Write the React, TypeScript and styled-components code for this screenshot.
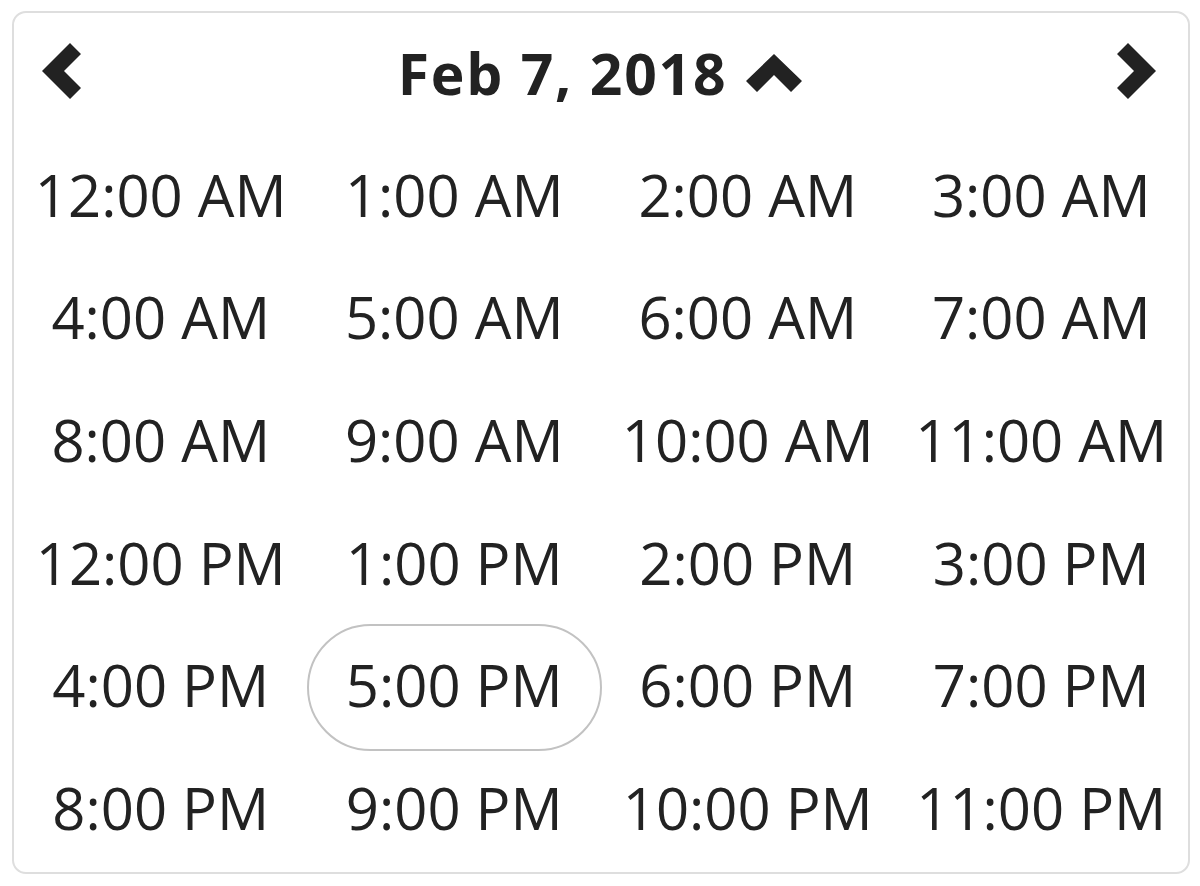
import styled, { createGlobalStyle } from 'styled-components'
import { FC, useState } from 'react'

const GlobalStyle = createGlobalStyle`
  html, body {
    margin: 0;
    padding: 0;
    background: #fff;
  }
  body {
    font-family: 'Open Sans', 'Liberation Sans', sans-serif;
    color: #222;
  }
`

const HOURS = Array.from({ length: 24 }, (_, i) => {
  const h = i % 12 === 0 ? 12 : i % 12
  return `${h}:00 ${i < 12 ? 'AM' : 'PM'}`
})

const Picker = styled.div`
  margin: 11px 0 0 12px;
  width: 1178px;
  box-sizing: border-box;
  border: 2px solid #dedede;
  border-radius: 14px;
  background: #fff;
  overflow: hidden;
`

const Header = styled.div`
  height: 123px;
  display: flex;
  align-items: center;
  justify-content: space-between;
  padding: 0 32px 0 28px;
`

const NavButton = styled.button`
  border: 0;
  background: none;
  padding: 0;
  margin: 0 0 8px;
  display: flex;
  cursor: pointer;
  color: #222;
`

const Title = styled.button`
  border: 0;
  background: none;
  padding: 0 0 0 2px;
  display: flex;
  align-items: center;
  gap: 19px;
  font-family: 'Open Sans', 'Liberation Sans', sans-serif;
  font-weight: 700;
  font-size: 57px;
  letter-spacing: 1.8px;
  line-height: 1.2;
  color: #222;
  cursor: pointer;
  margin-bottom: 2px;
`

const Grid = styled.div`
  display: grid;
  grid-template-columns: repeat(4, minmax(0, 1fr));
  grid-template-rows: repeat(6, 122.6px);
`

const Slot = styled.button<{ $selected?: boolean }>`
  margin: -2px -1px;
  border: 2px solid ${(p) => (p.$selected ? '#c2c2c2' : 'transparent')};
  border-radius: 64px;
  background: none;
  padding: 0 0 6px;
  display: flex;
  align-items: center;
  justify-content: center;
  font-family: 'Open Sans', 'Liberation Sans', sans-serif;
  font-size: 58px;
  font-weight: 400;
  color: #222;
  white-space: nowrap;
  cursor: pointer;
`

const ChevronSide: FC<{ dir: 'left' | 'right' }> = ({ dir }) => (
  <svg width='39' height='56' viewBox='0 0 39 56'>
    <polygon
      fill='currentColor'
      points={
        dir === 'left'
          ? '0,28 28,0 39,11 22,28 39,45 28,56'
          : '39,28 11,0 0,11 17,28 0,45 11,56'
      }
    />
  </svg>
)

const ChevronUp = () => (
  <svg width='56' height='38' viewBox='0 0 56 38'>
    <polygon fill='#222' points='28,0 56,27 45,38 28,21 11,38 0,27' />
  </svg>
)

export default function App() {
  const [selected, setSelected] = useState(17)

  return (
    <>
      <GlobalStyle />
      <Picker>
        <Header>
          <NavButton aria-label='Previous day'>
            <ChevronSide dir='left' />
          </NavButton>
          <Title>
            Feb 7, 2018
            <ChevronUp />
          </Title>
          <NavButton aria-label='Next day'>
            <ChevronSide dir='right' />
          </NavButton>
        </Header>
        <Grid>
          {HOURS.map((label, i) => (
            <Slot key={label} $selected={i === selected} onClick={() => setSelected(i)}>
              {label}
            </Slot>
          ))}
        </Grid>
      </Picker>
    </>
  )
}
